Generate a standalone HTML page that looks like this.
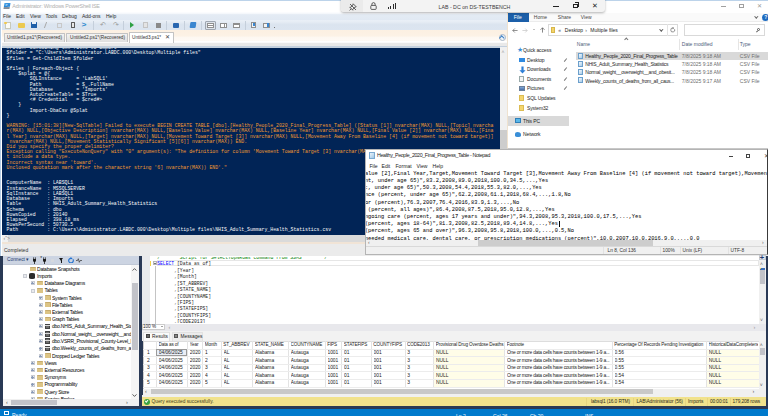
<!DOCTYPE html>
<html><head><meta charset="utf-8">
<style>
*{margin:0;padding:0;box-sizing:border-box}
html,body{width:768px;height:416px;overflow:hidden;background:#fff;font-family:"Liberation Sans",sans-serif}
.a{position:absolute}
.mono{font-family:"Liberation Mono",monospace}
pre{font-family:"Liberation Mono",monospace;white-space:pre}
</style></head><body>
<div class="a" style="left:0;top:0;width:768px;height:416px;overflow:hidden">

<!-- ===== ISE ===== -->
<div id="ise" class="a" style="left:0;top:0;width:768px;height:257px;background:#fff">
  <!-- title bar -->
  <div class="a" style="left:0;top:0;width:768px;height:12px;background:#fff;border-top:1px solid #bcd3ea"></div>
  <div class="a" style="left:0;top:0;width:1.3px;height:257px;background:#b5cde6"></div>
  <div class="a" style="left:4px;top:2.7px;width:6px;height:6px;background:linear-gradient(#3795e0 0,#2a86d6 62%,#8894a2 66%,#7d8a99 100%);transform:skewX(-10deg)"></div>
  <div class="a" style="left:5.2px;top:2.8px;font:bold 3.8px 'Liberation Mono';color:#e8f3fc">&gt;_</div>
  <div class="a" style="left:12.3px;top:2.9px;font-size:5.4px;letter-spacing:-0.22px;color:#b0b0b0;white-space:nowrap">Administrator: Windows PowerShell ISE</div>
  <!-- menu + toolbar gradient -->
  <div class="a" style="left:2px;top:12px;width:766px;height:8.5px;background:linear-gradient(#fbfcfe 0,#fbfcfe 12%,#e4ebf4 30%,#e1e9f3 90%,#f2f6fa 100%)"></div>
  <div class="a" style="left:2px;top:20.5px;width:766px;height:9.8px;background:linear-gradient(#e9eff6,#dbe4ef 40%,#dce5f0)"></div>
  <div class="a" style="left:3px;top:13.3px;font-size:5px;color:#2b2b2b;white-space:nowrap">File</div>
  <div class="a" style="left:16px;top:13.3px;font-size:5px;color:#2b2b2b;white-space:nowrap">Edit</div>
  <div class="a" style="left:30px;top:13.3px;font-size:5px;color:#2b2b2b;white-space:nowrap">View</div>
  <div class="a" style="left:45.5px;top:13.3px;font-size:5px;color:#2b2b2b;white-space:nowrap">Tools</div>
  <div class="a" style="left:62px;top:13.3px;font-size:5px;color:#2b2b2b;white-space:nowrap">Debug</div>
  <div class="a" style="left:82px;top:13.3px;font-size:5px;color:#2b2b2b;white-space:nowrap">Add-ons</div>
  <div class="a" style="left:106px;top:13.3px;font-size:5px;color:#2b2b2b;white-space:nowrap">Help</div>
  <!-- toolbar icons -->
  <div class="a" style="left:4.5px;top:22px;width:6px;height:6.5px;background:#fbfbf6;border:0.5px solid #c9c9b8"></div>
  <div class="a" style="left:4px;top:21.5px;width:2.5px;height:2.5px;background:#f2c94c;border-radius:50%"></div>
  <div class="a" style="left:17.5px;top:23px;width:7px;height:5px;background:#ecc94f;border-radius:1px"></div>
  <div class="a" style="left:30.5px;top:21.5px;width:6.5px;height:6.5px;background:#1f5fa8;border-radius:0.5px"></div>
  <div class="a" style="left:32px;top:21.5px;width:3.5px;height:2.5px;background:#e8eef5"></div>
  <div class="a" style="left:45px;top:22px;width:3px;height:6px;border-left:1px solid #a9a9a9;transform:skewX(-20deg)"></div>
  <div class="a" style="left:57px;top:22.5px;width:5px;height:5px;border:0.7px solid #c8c8c8"></div>
  <div class="a" style="left:70.5px;top:22px;width:4.5px;height:6px;border:1.2px solid #5a5a5a;border-radius:0.5px;background:#e8e8e8"></div>
  <div class="a" style="left:82px;top:21px;font:bold 7px 'Liberation Sans';color:#2a88d0;transform:scaleX(1.2)">&gt;</div>
  <div class="a" style="left:93px;top:21px;width:1px;height:9px;background:#c5cfdb"></div>
  <div class="a" style="left:100px;top:21px;font:6.5px 'Liberation Sans';color:#9a9a9a">&#x21b6;</div>
  <div class="a" style="left:112.5px;top:21px;font:6.5px 'Liberation Sans';color:#9a9a9a">&#x21b7;</div>
  <div class="a" style="left:123px;top:21px;width:1px;height:9px;background:#c5cfdb"></div>
  <div class="a" style="left:130px;top:22px;width:0;height:0;border-left:4.5px solid #2ea043;border-top:3px solid transparent;border-bottom:3px solid transparent"></div>
  <div class="a" style="left:143px;top:22px;width:5px;height:6px;background:#e4e4e4;border:0.5px solid #c4c4c4"></div>
  <div class="a" style="left:156px;top:22.5px;width:5px;height:5px;background:#8a8a8a"></div>
  <div class="a" style="left:166px;top:21px;width:1px;height:9px;background:#c5cfdb"></div>
  <div class="a" style="left:172.5px;top:23px;width:6px;height:4.5px;background:#2866b0;border-radius:1px"></div>
  <div class="a" style="left:184px;top:21px;width:1px;height:9px;background:#c5cfdb"></div>
  <div class="a" style="left:189.5px;top:22px;width:6px;height:6px;background:#3a86d0;border-radius:1px;transform:skewX(-8deg)"></div>
  <div class="a" style="left:201px;top:21px;width:1px;height:9px;background:#c5cfdb"></div>
  <div class="a" style="left:205px;top:20.5px;width:10.5px;height:9px;background:#dde3ea;border:0.8px solid #9ea6b0;border-radius:1px"></div>
  <div class="a" style="left:207px;top:22.5px;width:6.5px;height:5px;border:0.7px solid #8f8f8f;background:#fff"></div>
  <div class="a" style="left:207px;top:25px;width:6.5px;height:0.7px;background:#8f8f8f"></div>
  <div class="a" style="left:220px;top:22.5px;width:6.5px;height:5px;border:0.7px solid #8f8f8f;background:#fff"></div>
  <div class="a" style="left:223.5px;top:22.5px;width:0.7px;height:5px;background:#8f8f8f"></div>
  <div class="a" style="left:233px;top:22.5px;width:6.5px;height:5px;border:0.7px solid #8f8f8f;background:#fff"></div>
  <div class="a" style="left:233px;top:23.5px;width:6.5px;height:0.7px;background:#8f8f8f"></div>
  <div class="a" style="left:245px;top:21px;width:1px;height:9px;background:#c5cfdb"></div>
  <div class="a" style="left:251px;top:22px;width:5px;height:6px;border:0.7px solid #8f8f8f;background:#f4f4f4"></div>
  <div class="a" style="left:252.5px;top:22.5px;width:2px;height:3px;background:#3a86d0"></div>
  <div class="a" style="left:263px;top:22.5px;width:6.5px;height:5px;border:0.7px solid #8f8f8f;background:#f4f4f4"></div>
  <div class="a" style="left:266.5px;top:23px;width:2.5px;height:4px;background:#3a86d0"></div>
  <div class="a" style="left:274px;top:27px;width:1px;height:1px;background:#777"></div>
  <!-- tab bar -->
  <div class="a" style="left:2px;top:30.3px;width:766px;height:11.2px;background:linear-gradient(#fcf0e2,#fcf2e6 55%,#fdf8f2 65%,#fefaf5)"></div>
  <div class="a" style="left:2px;top:41.5px;width:766px;height:1px;background:#fafafa"></div>
  <div class="a" style="left:2px;top:42.5px;width:766px;height:4px;background:#e9e9e9"></div>
  <div class="a" style="left:2px;top:46.2px;width:766px;height:1.4px;background:#c3d0de"></div>
  <div class="a" style="left:4px;top:33px;width:61px;height:9px;background:linear-gradient(#f3f3f3,#dfdfdf);border:0.6px solid #c3c3c3;border-bottom:none;border-radius:1px 1px 0 0"></div>
  <div class="a" style="left:7px;top:34.6px;font-size:4.7px;color:#333;white-space:nowrap">Untitled1.ps1*(Recovered)</div>
  <div class="a" style="left:66px;top:33px;width:62px;height:9px;background:linear-gradient(#f3f3f3,#dfdfdf);border:0.6px solid #c3c3c3;border-bottom:none;border-radius:1px 1px 0 0"></div>
  <div class="a" style="left:70px;top:34.6px;font-size:4.7px;color:#333;white-space:nowrap">Untitled2.ps1*(Recovered)</div>
  <div class="a" style="left:129px;top:32px;width:45px;height:10.5px;background:#fff;border:0.6px solid #c3c3c3;border-bottom:none;border-radius:1px 1px 0 0"></div>
  <div class="a" style="left:132px;top:34.6px;font-size:4.7px;color:#333;white-space:nowrap">Untitled3.ps1*</div>
  <div class="a" style="left:165px;top:33.4px;font-size:6px;color:#444">&#x2715;</div>
  <!-- collapse button -->
  <div class="a" style="left:498.5px;top:33.5px;width:7px;height:7px;border-radius:50%;background:#eef3f8;border:0.6px solid #a5b4c6"></div>
  <div class="a" style="left:500.3px;top:35.8px;width:3.5px;height:3.5px;border-left:1px solid #3b7fc4;border-top:1px solid #3b7fc4;transform:rotate(45deg)"></div>
  <!-- editor -->
  <div class="a" style="left:2px;top:47.6px;width:498px;height:187.4px;background:#012456;overflow:hidden"><pre id="isepre" class="a" style="left:4.6px;top:-2.4px;font-size:4.84px;line-height:5.2px;color:#fafafa">#Folder containing the files to import
$folder = "C:\Users\Administrator.LABDC.000\Desktop\Multiple files"
$files = Get-ChildItem $folder

$files | Foreach-Object {
    $splat = @{
        SQLInstance     = 'LabSQL1'
        Path            = $_.FullName
        Database        = 'Imports'
        AutoCreateTable = $True
        &lt;# Credential   = $cred#&gt;
    }
        Import-DbaCsv @Splat
}

<span style="color:#f29a30">WARNING: [15:01:38][New-SqlTable] Failed to execute BEGIN CREATE TABLE [dbo].[Healthy_People_2020_Final_Progress_Table] ([Status [1]] nvarchar(MAX) NULL,[Topic] nvarcha
r(MAX) NULL,[Objective Description] nvarchar(MAX) NULL,[Baseline Value] nvarchar(MAX) NULL,[Baseline Year] nvarchar(MAX) NULL,[Final Value [2]] nvarchar(MAX) NULL,[Fina
l Year] nvarchar(MAX) NULL,[Target] nvarchar(MAX) NULL,[Movement Toward Target [3]] nvarchar(MAX) NULL,[Movement Away From Baseline [4] (if movement not toward target)]
 nvarchar(MAX) NULL,[Movement Statistically Significant [5][6]] nvarchar(MAX)) END.
Did you specify the proper delimiter?
Exception calling "ExecuteNonQuery" with "0" argument(s): "The definition for column 'Movement Toward Target [3] nvarchar(MAX)' must include a data type.
t include a data type.
Incorrect syntax near 'toward'.
Unclosed quotation mark after the character string '6] nvarchar(MAX)) END'."</span>


ComputerName  : LABSQL1
InstanceName  : MSSQLSERVER
SqlInstance   : LABSQL1
Database      : Imports
Table         : NHIS_Adult_Summary_Health_Statistics
Schema        : dbo
RowsCopied    : 20140
Elapsed       : 398.18 ms
RowsPerSecond : 50730.5
Path          : C:\Users\Administrator.LABDC.000\Desktop\Multiple files\NHIS_Adult_Summary_Health_Statistics.csv</pre></div>
  <!-- scrollbars -->
  <div class="a" style="left:499.5px;top:47px;width:8.5px;height:188px;background:#f0f0f0"></div>
<div class="a" style="left:500px;top:130px;width:7.5px;height:105px;background:#cdcdcd"></div>
<div class="a" style="left:501.5px;top:49px;font-size:5px;color:#999">&#x2c4;</div>

  <div class="a" style="left:2px;top:235px;width:766px;height:7px;background:#dadada"></div><div class="a" style="left:2px;top:235px;width:6px;height:7px;background:#f0f0f0"></div><div class="a" style="left:3.5px;top:235.2px;font-size:5px;color:#777">&#x2039;"></div>
  <div class="a" style="left:2px;top:242px;width:766px;height:1.5px;background:#f1e4d6"></div>
  <div class="a" style="left:2px;top:243.5px;width:766px;height:12.5px;background:#ebebeb"></div>
  <div class="a" style="left:4px;top:246.6px;font-size:5px;color:#333">Completed</div>
</div>

<!-- ===== SSMS ===== -->
<div class="a" style="left:0;top:256px;width:768px;height:153px;background:#293955"></div>
<div class="a" style="left:3px;top:256px;width:135.5px;height:8.5px;background:#ccd4e2;border-bottom:0.5px solid #c0c8d6"></div>
<div class="a" style="left:7px;top:257.2px;font-size:4.8px;color:#1e3a6e;white-space:nowrap;">Connect &#x25be;</div>
<svg class="a" style="left:33px;top:256.8px" width="3" height="7" viewBox="0 0 3 7"><path d="M0.6 0.3 V2 M2.4 0.3 V2" stroke="#1a1a1a" stroke-width="0.7"/><path d="M0 2 H3 V3.6 Q3 4.8 1.9 4.9 V7 H1.1 V4.9 Q0 4.8 0 3.6 Z" fill="#1a1a1a"/></svg>
<svg class="a" style="left:42.8px;top:256.8px" width="3" height="7" viewBox="0 0 3 7"><path d="M0.6 0.3 V2 M2.4 0.3 V2" stroke="#1a1a1a" stroke-width="0.7"/><path d="M0 2 H3 V3.6 Q3 4.8 1.9 4.9 V7 H1.1 V4.9 Q0 4.8 0 3.6 Z" fill="#1a1a1a"/></svg>
<div class="a" style="left:40.3px;top:256px;font-size:4.5px;color:#1a1a1a;white-space:nowrap;">*</div>
<div class="a" style="left:51px;top:258.5px;width:3px;height:3px;background:#d5d8de"></div>
<div class="a" style="left:59px;top:257.6px;width:0;height:0;border-left:2.5px solid transparent;border-right:2.5px solid transparent;border-top:3px solid #1a1a1a"></div>
<div class="a" style="left:60.9px;top:260.3px;width:1.2px;height:2.6px;background:#1a1a1a"></div>
<svg class="a" style="left:67.5px;top:256.6px" width="6" height="6.5" viewBox="0 0 6 6.5"><path d="M4.9 2.3 A2.3 2.3 0 1 1 3 1.3" fill="none" stroke="#1d6fd0" stroke-width="1.1"/><path d="M2.6 0 L4.6 1.4 L2.6 2.6 Z" fill="#1d6fd0"/></svg>
<svg class="a" style="left:76px;top:257.5px" width="6" height="5" viewBox="0 0 6 5"><path d="M0 2.5 H1.5 L2.3 0.7 L3.3 4.3 L4.1 2.5 H6" fill="none" stroke="#333" stroke-width="0.7"/></svg>
<div class="a" style="left:3px;top:264.5px;width:128px;height:134.5px;background:#fff"></div>
<div class="a" style="left:131px;top:264.5px;width:7.5px;height:134.5px;background:#f0f0f0"></div>
<div class="a" style="left:131.8px;top:283px;width:6px;height:113px;background:#c2c3c9"></div>
<div class="a" style="left:132.3px;top:266px;font-size:5px;color:#555;white-space:nowrap;">&#x2c4;</div>
<div class="a" style="left:132.3px;top:392px;font-size:5px;color:#555;white-space:nowrap;">&#x2c5;</div>
<div class="a" style="left:3px;top:399px;width:128px;height:6.5px;background:#f0f0f0"></div>
<div class="a" style="left:11px;top:399.6px;width:46px;height:5.4px;background:#c2c3c9"></div>
<div class="a" style="left:6px;top:398.6px;font-size:5.5px;color:#555;white-space:nowrap;">&#x2039;</div>
<div class="a" style="left:126px;top:398.6px;font-size:5.5px;color:#555;white-space:nowrap;">&#x203a;</div>
<div class="a" style="left:131px;top:399px;width:7.5px;height:6.5px;background:#f0f0f0"></div>
<div class="a" style="left:3px;top:405.5px;width:135.5px;height:1px;background:#293955"></div>
<div class="a" style="left:3px;top:263.5px;width:128px;height:135.5px;overflow:hidden">
<div class="a" style="left:27px;top:3.0px;width:6px;height:4.8px;background:#c6ab6c;border-radius:0.5px"></div>
<div class="a" style="left:27.4px;top:4.0px;width:5.6px;height:3.8px;background:#dcc485"></div>
<div class="a" style="left:34px;top:2.3px;font-size:5px;color:#000;white-space:nowrap;letter-spacing:-0.22px">Database Snapshots</div>
<div class="a" style="left:19.5px;top:10.5px;width:4px;height:4px;background:#e8eaee;border:0.5px solid #c9ccd3"></div>
<div class="a" style="left:26px;top:9.5px;width:5.5px;height:6px;background:#2b2b2b;border-radius:2.5px/1.2px"></div>
<div class="a" style="left:34px;top:9.3px;font-size:5px;color:#000;white-space:nowrap;letter-spacing:-0.22px">Imports</div>
<div class="a" style="left:27.5px;top:17.69999999999999px;width:4px;height:4px;background:#e8eaee;border:0.5px solid #c9ccd3"></div>
<div class="a" style="left:28.3px;top:19.399999999999988px;width:2.4px;height:0.6px;background:#8a9bb8"></div>
<div class="a" style="left:29.2px;top:18.49999999999999px;width:0.6px;height:2.4px;background:#8a9bb8"></div>
<div class="a" style="left:34px;top:17.19999999999999px;width:6px;height:4.8px;background:#c6ab6c;border-radius:0.5px"></div>
<div class="a" style="left:34.4px;top:18.19999999999999px;width:5.6px;height:3.8px;background:#dcc485"></div>
<div class="a" style="left:41.5px;top:16.49999999999999px;font-size:5px;color:#000;white-space:nowrap;letter-spacing:-0.22px">Database Diagrams</div>
<div class="a" style="left:27.5px;top:25.0px;width:4px;height:4px;background:#e8eaee;border:0.5px solid #c9ccd3"></div>
<div class="a" style="left:34px;top:24.5px;width:6px;height:4.8px;background:#c6ab6c;border-radius:0.5px"></div>
<div class="a" style="left:34.4px;top:25.5px;width:5.6px;height:3.8px;background:#dcc485"></div>
<div class="a" style="left:41.5px;top:23.8px;font-size:5px;color:#000;white-space:nowrap;letter-spacing:-0.22px">Tables</div>
<div class="a" style="left:35.5px;top:32.19999999999999px;width:4px;height:4px;background:#e8eaee;border:0.5px solid #c9ccd3"></div>
<div class="a" style="left:36.3px;top:33.89999999999999px;width:2.4px;height:0.6px;background:#8a9bb8"></div>
<div class="a" style="left:37.2px;top:32.999999999999986px;width:0.6px;height:2.4px;background:#8a9bb8"></div>
<div class="a" style="left:41.5px;top:31.69999999999999px;width:6px;height:4.8px;background:#c6ab6c;border-radius:0.5px"></div>
<div class="a" style="left:41.9px;top:32.69999999999999px;width:5.6px;height:3.8px;background:#dcc485"></div>
<div class="a" style="left:49.0px;top:30.99999999999999px;font-size:5px;color:#000;white-space:nowrap;letter-spacing:-0.22px">System Tables</div>
<div class="a" style="left:35.5px;top:39.30000000000001px;width:4px;height:4px;background:#e8eaee;border:0.5px solid #c9ccd3"></div>
<div class="a" style="left:36.3px;top:41.000000000000014px;width:2.4px;height:0.6px;background:#8a9bb8"></div>
<div class="a" style="left:37.2px;top:40.10000000000001px;width:0.6px;height:2.4px;background:#8a9bb8"></div>
<div class="a" style="left:41.5px;top:38.80000000000001px;width:6px;height:4.8px;background:#c6ab6c;border-radius:0.5px"></div>
<div class="a" style="left:41.9px;top:39.80000000000001px;width:5.6px;height:3.8px;background:#dcc485"></div>
<div class="a" style="left:49.0px;top:38.10000000000001px;font-size:5px;color:#000;white-space:nowrap;letter-spacing:-0.22px">FileTables</div>
<div class="a" style="left:35.5px;top:46.5px;width:4px;height:4px;background:#e8eaee;border:0.5px solid #c9ccd3"></div>
<div class="a" style="left:36.3px;top:48.2px;width:2.4px;height:0.6px;background:#8a9bb8"></div>
<div class="a" style="left:37.2px;top:47.3px;width:0.6px;height:2.4px;background:#8a9bb8"></div>
<div class="a" style="left:41.5px;top:46.0px;width:6px;height:4.8px;background:#c6ab6c;border-radius:0.5px"></div>
<div class="a" style="left:41.9px;top:47.0px;width:5.6px;height:3.8px;background:#dcc485"></div>
<div class="a" style="left:49.0px;top:45.3px;font-size:5px;color:#000;white-space:nowrap;letter-spacing:-0.22px">External Tables</div>
<div class="a" style="left:35.5px;top:53.5px;width:4px;height:4px;background:#e8eaee;border:0.5px solid #c9ccd3"></div>
<div class="a" style="left:36.3px;top:55.2px;width:2.4px;height:0.6px;background:#8a9bb8"></div>
<div class="a" style="left:37.2px;top:54.3px;width:0.6px;height:2.4px;background:#8a9bb8"></div>
<div class="a" style="left:41.5px;top:53.0px;width:6px;height:4.8px;background:#c6ab6c;border-radius:0.5px"></div>
<div class="a" style="left:41.9px;top:54.0px;width:5.6px;height:3.8px;background:#dcc485"></div>
<div class="a" style="left:49.0px;top:52.3px;font-size:5px;color:#000;white-space:nowrap;letter-spacing:-0.22px">Graph Tables</div>
<div class="a" style="left:35.5px;top:60.80000000000001px;width:4px;height:4px;background:#e8eaee;border:0.5px solid #c9ccd3"></div>
<div class="a" style="left:36.3px;top:62.500000000000014px;width:2.4px;height:0.6px;background:#8a9bb8"></div>
<div class="a" style="left:37.2px;top:61.60000000000001px;width:0.6px;height:2.4px;background:#8a9bb8"></div>
<div class="a" style="left:41.5px;top:60.000000000000014px;width:5.5px;height:5.5px;background:#6d6d6d;border:0.5px solid #444"></div>
<div class="a" style="left:42.0px;top:61.500000000000014px;width:4.5px;height:0.5px;background:#ddd"></div>
<div class="a" style="left:49.0px;top:59.60000000000001px;font-size:5px;color:#000;white-space:nowrap;letter-spacing:-0.22px">dbo.NHIS_Adult_Summary_Health_Statistics</div>
<div class="a" style="left:35.5px;top:68.30000000000001px;width:4px;height:4px;background:#e8eaee;border:0.5px solid #c9ccd3"></div>
<div class="a" style="left:36.3px;top:70.00000000000001px;width:2.4px;height:0.6px;background:#8a9bb8"></div>
<div class="a" style="left:37.2px;top:69.10000000000001px;width:0.6px;height:2.4px;background:#8a9bb8"></div>
<div class="a" style="left:41.5px;top:67.50000000000001px;width:5.5px;height:5.5px;background:#6d6d6d;border:0.5px solid #444"></div>
<div class="a" style="left:42.0px;top:69.00000000000001px;width:4.5px;height:0.5px;background:#ddd"></div>
<div class="a" style="left:49.0px;top:67.10000000000001px;font-size:5px;color:#000;white-space:nowrap;letter-spacing:-0.22px">dbo.Normal_weight__overweight__and_obesity</div>
<div class="a" style="left:35.5px;top:75.69999999999999px;width:4px;height:4px;background:#e8eaee;border:0.5px solid #c9ccd3"></div>
<div class="a" style="left:36.3px;top:77.39999999999999px;width:2.4px;height:0.6px;background:#8a9bb8"></div>
<div class="a" style="left:37.2px;top:76.49999999999999px;width:0.6px;height:2.4px;background:#8a9bb8"></div>
<div class="a" style="left:41.5px;top:74.89999999999999px;width:5.5px;height:5.5px;background:#6d6d6d;border:0.5px solid #444"></div>
<div class="a" style="left:42.0px;top:76.39999999999999px;width:4.5px;height:0.5px;background:#ddd"></div>
<div class="a" style="left:49.0px;top:74.49999999999999px;font-size:5px;color:#000;white-space:nowrap;letter-spacing:-0.22px">dbo.VSRR_Provisional_County-Level_Drug</div>
<div class="a" style="left:35.5px;top:83.10000000000002px;width:4px;height:4px;background:#e8eaee;border:0.5px solid #c9ccd3"></div>
<div class="a" style="left:36.3px;top:84.80000000000003px;width:2.4px;height:0.6px;background:#8a9bb8"></div>
<div class="a" style="left:37.2px;top:83.90000000000002px;width:0.6px;height:2.4px;background:#8a9bb8"></div>
<div class="a" style="left:41.5px;top:82.30000000000003px;width:5.5px;height:5.5px;background:#6d6d6d;border:0.5px solid #444"></div>
<div class="a" style="left:42.0px;top:83.80000000000003px;width:4.5px;height:0.5px;background:#ddd"></div>
<div class="a" style="left:49.0px;top:81.90000000000002px;font-size:5px;color:#000;white-space:nowrap;letter-spacing:-0.22px">dbo.Weekly_counts_of_deaths_from_all_causes</div>
<div class="a" style="left:35.5px;top:90.30000000000001px;width:4px;height:4px;background:#e8eaee;border:0.5px solid #c9ccd3"></div>
<div class="a" style="left:36.3px;top:92.00000000000001px;width:2.4px;height:0.6px;background:#8a9bb8"></div>
<div class="a" style="left:37.2px;top:91.10000000000001px;width:0.6px;height:2.4px;background:#8a9bb8"></div>
<div class="a" style="left:41.5px;top:89.80000000000001px;width:6px;height:4.8px;background:#c6ab6c;border-radius:0.5px"></div>
<div class="a" style="left:41.9px;top:90.80000000000001px;width:5.6px;height:3.8px;background:#dcc485"></div>
<div class="a" style="left:49.0px;top:89.10000000000001px;font-size:5px;color:#000;white-space:nowrap;letter-spacing:-0.22px">Dropped Ledger Tables</div>
<div class="a" style="left:27.5px;top:97.5px;width:4px;height:4px;background:#e8eaee;border:0.5px solid #c9ccd3"></div>
<div class="a" style="left:28.3px;top:99.2px;width:2.4px;height:0.6px;background:#8a9bb8"></div>
<div class="a" style="left:29.2px;top:98.3px;width:0.6px;height:2.4px;background:#8a9bb8"></div>
<div class="a" style="left:34px;top:97.0px;width:6px;height:4.8px;background:#c6ab6c;border-radius:0.5px"></div>
<div class="a" style="left:34.4px;top:98.0px;width:5.6px;height:3.8px;background:#dcc485"></div>
<div class="a" style="left:41.5px;top:96.3px;font-size:5px;color:#000;white-space:nowrap;letter-spacing:-0.22px">Views</div>
<div class="a" style="left:27.5px;top:104.69999999999999px;width:4px;height:4px;background:#e8eaee;border:0.5px solid #c9ccd3"></div>
<div class="a" style="left:28.3px;top:106.39999999999999px;width:2.4px;height:0.6px;background:#8a9bb8"></div>
<div class="a" style="left:29.2px;top:105.49999999999999px;width:0.6px;height:2.4px;background:#8a9bb8"></div>
<div class="a" style="left:34px;top:104.19999999999999px;width:6px;height:4.8px;background:#c6ab6c;border-radius:0.5px"></div>
<div class="a" style="left:34.4px;top:105.19999999999999px;width:5.6px;height:3.8px;background:#dcc485"></div>
<div class="a" style="left:41.5px;top:103.49999999999999px;font-size:5px;color:#000;white-space:nowrap;letter-spacing:-0.22px">External Resources</div>
<div class="a" style="left:27.5px;top:111.89999999999998px;width:4px;height:4px;background:#e8eaee;border:0.5px solid #c9ccd3"></div>
<div class="a" style="left:28.3px;top:113.59999999999998px;width:2.4px;height:0.6px;background:#8a9bb8"></div>
<div class="a" style="left:29.2px;top:112.69999999999997px;width:0.6px;height:2.4px;background:#8a9bb8"></div>
<div class="a" style="left:34px;top:111.39999999999998px;width:6px;height:4.8px;background:#c6ab6c;border-radius:0.5px"></div>
<div class="a" style="left:34.4px;top:112.39999999999998px;width:5.6px;height:3.8px;background:#dcc485"></div>
<div class="a" style="left:41.5px;top:110.69999999999997px;font-size:5px;color:#000;white-space:nowrap;letter-spacing:-0.22px">Synonyms</div>
<div class="a" style="left:27.5px;top:119.10000000000002px;width:4px;height:4px;background:#e8eaee;border:0.5px solid #c9ccd3"></div>
<div class="a" style="left:28.3px;top:120.80000000000003px;width:2.4px;height:0.6px;background:#8a9bb8"></div>
<div class="a" style="left:29.2px;top:119.90000000000002px;width:0.6px;height:2.4px;background:#8a9bb8"></div>
<div class="a" style="left:34px;top:118.60000000000002px;width:6px;height:4.8px;background:#c6ab6c;border-radius:0.5px"></div>
<div class="a" style="left:34.4px;top:119.60000000000002px;width:5.6px;height:3.8px;background:#dcc485"></div>
<div class="a" style="left:41.5px;top:117.90000000000002px;font-size:5px;color:#000;white-space:nowrap;letter-spacing:-0.22px">Programmability</div>
<div class="a" style="left:27.5px;top:126.30000000000001px;width:4px;height:4px;background:#e8eaee;border:0.5px solid #c9ccd3"></div>
<div class="a" style="left:28.3px;top:128.0px;width:2.4px;height:0.6px;background:#8a9bb8"></div>
<div class="a" style="left:29.2px;top:127.10000000000001px;width:0.6px;height:2.4px;background:#8a9bb8"></div>
<div class="a" style="left:34px;top:125.80000000000001px;width:6px;height:4.8px;background:#c6ab6c;border-radius:0.5px"></div>
<div class="a" style="left:34.4px;top:126.80000000000001px;width:5.6px;height:3.8px;background:#dcc485"></div>
<div class="a" style="left:41.5px;top:125.10000000000001px;font-size:5px;color:#000;white-space:nowrap;letter-spacing:-0.22px">Query Store</div>
<div class="a" style="left:27.5px;top:133.5px;width:4px;height:4px;background:#e8eaee;border:0.5px solid #c9ccd3"></div>
<div class="a" style="left:28.3px;top:135.2px;width:2.4px;height:0.6px;background:#8a9bb8"></div>
<div class="a" style="left:29.2px;top:134.3px;width:0.6px;height:2.4px;background:#8a9bb8"></div>
<div class="a" style="left:34px;top:133.0px;width:6px;height:4.8px;background:#c6ab6c;border-radius:0.5px"></div>
<div class="a" style="left:34.4px;top:134.0px;width:5.6px;height:3.8px;background:#dcc485"></div>
<div class="a" style="left:41.5px;top:132.3px;font-size:5px;color:#000;white-space:nowrap;letter-spacing:-0.22px">Service Broker</div>
</div>
<div class="a" style="left:131px;top:264.5px;width:7.5px;height:134.5px;background:#f5f5f5"></div>
<div class="a" style="left:131.8px;top:283px;width:6px;height:67px;background:#c2c3c9"></div>
<svg class="a" style="left:132px;top:267.5px" width="5" height="3" viewBox="0 0 5 3"><path d="M0.5 2.6 L2.5 0.6 L4.5 2.6" fill="none" stroke="#333" stroke-width="0.8"/></svg>
<svg class="a" style="left:132px;top:393.5px" width="5" height="3" viewBox="0 0 5 3"><path d="M0.5 0.4 L2.5 2.4 L4.5 0.4" fill="none" stroke="#333" stroke-width="0.8"/></svg>
<div class="a" style="left:141.5px;top:256px;width:626.5px;height:67.5px;background:#fff"></div>
<div class="a" style="left:141.5px;top:256px;width:8px;height:67.5px;background:#e9eaec"></div>
<div class="a" style="left:149.5px;top:256px;width:1.2px;height:67.5px;background:#fff"></div>
<div class="a" style="left:154.6px;top:265.5px;width:0.5px;height:58px;background:#c4c4c4"></div>
<div class="a" style="left:152.6px;top:261.3px;width:4px;height:4px;background:#f4f4f4;border:0.5px solid #b5b5b5"></div>
<div class="a" style="left:153.6px;top:263.1px;width:2px;height:0.5px;background:#777"></div>
<div class="a" style="left:150px;top:260.5px;width:1.3px;height:5px;background:#f2d24a"></div>
<div class="a" style="left:156.8px;top:260px;width:602px;height:6.3px;border:0.5px solid #e6e6e6"></div>
<div class="a" style="left:141.5px;top:256.8px;width:617px;height:66.7px;overflow:hidden"><pre id="qpre" class="a" style="left:15.7px;top:-2.2px;font-size:4.73px;line-height:6.48px;color:#222"><span style="color:#008000">/****** Script for SelectTopNRows command from SSMS  ******/</span>
<span style="color:#0000ff">SELECT</span> [Data as of]
      <span style="color:#808080">,</span>[Year]
      <span style="color:#808080">,</span>[Month]
      <span style="color:#808080">,</span>[ST_ABBREV]
      <span style="color:#808080">,</span>[STATE_NAME]
      <span style="color:#808080">,</span>[COUNTYNAME]
      <span style="color:#808080">,</span>[FIPS]
      <span style="color:#808080">,</span>[STATEFIPS]
      <span style="color:#808080">,</span>[COUNTYFIPS]
      <span style="color:#808080">,</span>[CODE2013]</pre></div>
<div class="a" style="left:759px;top:256px;width:7px;height:67.5px;background:#f0f0f0"></div>
<div class="a" style="left:759.3px;top:254.5px;width:6.5px;height:5.8px;background:#dfe3ea;border:0.5px solid #c3c9d3"></div>
<div class="a" style="left:759.8px;top:252.8px;font-size:7.5px;color:#1e3a6e;white-space:nowrap;font-weight:bold">+</div>
<div class="a" style="left:760px;top:260.5px;font-size:5px;color:#666;white-space:nowrap;">&#x2c4;</div>
<div class="a" style="left:759.8px;top:268.3px;width:5.5px;height:1.5px;background:#3d6fb8"></div>
<div class="a" style="left:759.8px;top:267.8px;width:1.5px;height:0.8px;background:#f2c94c"></div>
<div class="a" style="left:760px;top:270px;width:5px;height:14px;background:#c2c3c9"></div>
<div class="a" style="left:760px;top:316.5px;font-size:5px;color:#666;white-space:nowrap;">&#x2c5;</div>
<div class="a" style="left:766px;top:256px;width:2px;height:153px;background:#293955"></div>
<div class="a" style="left:141.5px;top:323.5px;width:624.5px;height:7px;background:#e8e8ec"></div>
<div class="a" style="left:142px;top:323.8px;width:23px;height:6.3px;background:#fff;border:0.5px solid #ccc"></div>
<div class="a" style="left:143px;top:324.3px;font-size:4.6px;color:#222;white-space:nowrap;">100 %</div>
<div class="a" style="left:161px;top:326.3px;width:0;height:0;border-left:1.3px solid transparent;border-right:1.3px solid transparent;border-top:1.5px solid #444"></div>
<div class="a" style="left:168.5px;top:323.8px;font-size:5.5px;color:#999;white-space:nowrap;">&#x2039;</div>
<div class="a" style="left:753.5px;top:323.8px;font-size:5.5px;color:#999;white-space:nowrap;">&#x203a;</div>
<div class="a" style="left:141.5px;top:330.5px;width:624.5px;height:10.5px;background:#f2f2f2"></div>
<div class="a" style="left:143px;top:331.5px;width:27px;height:9.5px;background:#fafafa;border:0.5px solid #e1e1e1;border-bottom:none"></div>
<div class="a" style="left:145.5px;top:333.5px;width:4.5px;height:4.5px;background:#666;border:0.5px solid #444"></div>
<div class="a" style="left:152px;top:333.8px;font-size:4.8px;color:#222;white-space:nowrap;">Results</div>
<div class="a" style="left:171.5px;top:331.5px;width:31px;height:9.5px;background:#ececec;border:0.5px solid #e1e1e1;border-bottom:none"></div>
<div class="a" style="left:173.5px;top:333.5px;width:4.5px;height:4.5px;background:#888;border:0.5px solid #555"></div>
<div class="a" style="left:180.5px;top:334.3px;font-size:4.8px;color:#222;white-space:nowrap;">Messages</div>
<div class="a" style="left:142.5px;top:341px;width:616px;height:47.5px;background:#fff;border-left:0.6px solid #ccc;border-top:0.6px solid #ddd"></div>
<div class="a" style="left:433.3px;top:348.5px;width:70.9px;height:39px;background:#fffde8"></div>
<div class="a" style="left:706px;top:348.5px;width:52.5px;height:39px;background:#fffde8"></div>
<div class="a" style="left:156px;top:341.2px;width:0.6px;height:46.5px;background:#e3e3e3"></div>
<div class="a" style="left:187px;top:341.2px;width:0.6px;height:46.5px;background:#e3e3e3"></div>
<div class="a" style="left:202.2px;top:341.2px;width:0.6px;height:46.5px;background:#e3e3e3"></div>
<div class="a" style="left:220.75px;top:341.2px;width:0.6px;height:46.5px;background:#e3e3e3"></div>
<div class="a" style="left:252.3px;top:341.2px;width:0.6px;height:46.5px;background:#e3e3e3"></div>
<div class="a" style="left:288px;top:341.2px;width:0.6px;height:46.5px;background:#e3e3e3"></div>
<div class="a" style="left:324.7px;top:341.2px;width:0.6px;height:46.5px;background:#e3e3e3"></div>
<div class="a" style="left:341.3px;top:341.2px;width:0.6px;height:46.5px;background:#e3e3e3"></div>
<div class="a" style="left:370.8px;top:341.2px;width:0.6px;height:46.5px;background:#e3e3e3"></div>
<div class="a" style="left:404.5px;top:341.2px;width:0.6px;height:46.5px;background:#e3e3e3"></div>
<div class="a" style="left:433.3px;top:341.2px;width:0.6px;height:46.5px;background:#e3e3e3"></div>
<div class="a" style="left:504.2px;top:341.2px;width:0.6px;height:46.5px;background:#e3e3e3"></div>
<div class="a" style="left:611.7px;top:341.2px;width:0.6px;height:46.5px;background:#e3e3e3"></div>
<div class="a" style="left:706px;top:341.2px;width:0.6px;height:46.5px;background:#e3e3e3"></div>
<div class="a" style="left:143px;top:348.5px;width:615.5px;height:0.6px;background:#ececec"></div>
<div class="a" style="left:143px;top:356.1px;width:615.5px;height:0.6px;background:#ececec"></div>
<div class="a" style="left:143px;top:363.7px;width:615.5px;height:0.6px;background:#ececec"></div>
<div class="a" style="left:143px;top:371.3px;width:615.5px;height:0.6px;background:#ececec"></div>
<div class="a" style="left:143px;top:378.9px;width:615.5px;height:0.6px;background:#ececec"></div>
<div class="a" style="left:143px;top:386.5px;width:615.5px;height:0.6px;background:#ececec"></div>
<div class="a" style="left:156.3px;top:348.6px;width:30.9px;height:7.6px;border:0.7px solid #9a9a9a;background:#e9eef5"></div>
<div class="a" style="left:143px;top:341px;width:615.5px;height:47px;overflow:hidden">
<div class="a" style="left:15.5px;top:1.4px;width:28px;overflow:hidden;font-size:4.6px;color:#1a1a1a;white-space:nowrap;letter-spacing:-0.1px">Data as of</div>
<div class="a" style="left:46.5px;top:1.4px;width:12.199999999999989px;overflow:hidden;font-size:4.6px;color:#1a1a1a;white-space:nowrap;letter-spacing:-0.1px">Year</div>
<div class="a" style="left:61.69999999999999px;top:1.4px;width:15.550000000000011px;overflow:hidden;font-size:4.6px;color:#1a1a1a;white-space:nowrap;letter-spacing:-0.1px">Month</div>
<div class="a" style="left:80.25px;top:1.4px;width:28.55000000000001px;overflow:hidden;font-size:4.6px;color:#1a1a1a;white-space:nowrap;letter-spacing:-0.1px">ST_ABBREV</div>
<div class="a" style="left:111.80000000000001px;top:1.4px;width:32.69999999999999px;overflow:hidden;font-size:4.6px;color:#1a1a1a;white-space:nowrap;letter-spacing:-0.1px">STATE_NAME</div>
<div class="a" style="left:147.5px;top:1.4px;width:33.69999999999999px;overflow:hidden;font-size:4.6px;color:#1a1a1a;white-space:nowrap;letter-spacing:-0.1px">COUNTYNAME</div>
<div class="a" style="left:184.2px;top:1.4px;width:13.600000000000023px;overflow:hidden;font-size:4.6px;color:#1a1a1a;white-space:nowrap;letter-spacing:-0.1px">FIPS</div>
<div class="a" style="left:200.8px;top:1.4px;width:26.5px;overflow:hidden;font-size:4.6px;color:#1a1a1a;white-space:nowrap;letter-spacing:-0.1px">STATEFIPS</div>
<div class="a" style="left:230.3px;top:1.4px;width:30.69999999999999px;overflow:hidden;font-size:4.6px;color:#1a1a1a;white-space:nowrap;letter-spacing:-0.1px">COUNTYFIPS</div>
<div class="a" style="left:264.0px;top:1.4px;width:25.80000000000001px;overflow:hidden;font-size:4.6px;color:#1a1a1a;white-space:nowrap;letter-spacing:-0.1px">CODE2013</div>
<div class="a" style="left:292.8px;top:1.4px;width:67.89999999999998px;overflow:hidden;font-size:4.6px;color:#1a1a1a;white-space:nowrap;letter-spacing:-0.1px">Provisional Drug Overdose Deaths</div>
<div class="a" style="left:363.7px;top:1.4px;width:104.50000000000006px;overflow:hidden;font-size:4.6px;color:#1a1a1a;white-space:nowrap;letter-spacing:-0.1px">Footnote</div>
<div class="a" style="left:471.20000000000005px;top:1.4px;width:91.29999999999995px;overflow:hidden;font-size:4.6px;color:#1a1a1a;white-space:nowrap;letter-spacing:-0.1px">Percentage Of Records Pending Investigation</div>
<div class="a" style="left:565.5px;top:1.4px;width:49.5px;overflow:hidden;font-size:4.6px;color:#1a1a1a;white-space:nowrap;letter-spacing:-0.1px">HistoricalDataCompleteness</div>
<div class="a" style="left:4px;top:9.0px;font-size:4.9px;color:#1a1a1a">1</div>
<div class="a" style="left:15.8px;top:9.0px;width:27.5px;overflow:hidden;font-size:4.9px;color:#1a1a1a;white-space:nowrap;letter-spacing:-0.05px">04/06/2025</div>
<div class="a" style="left:46.8px;top:9.0px;width:11.699999999999989px;overflow:hidden;font-size:4.9px;color:#1a1a1a;white-space:nowrap;letter-spacing:-0.05px">2020</div>
<div class="a" style="left:61.999999999999986px;top:9.0px;width:15.050000000000011px;overflow:hidden;font-size:4.9px;color:#1a1a1a;white-space:nowrap;letter-spacing:-0.05px">1</div>
<div class="a" style="left:80.55px;top:9.0px;width:28.05000000000001px;overflow:hidden;font-size:4.9px;color:#1a1a1a;white-space:nowrap;letter-spacing:-0.05px">AL</div>
<div class="a" style="left:112.10000000000001px;top:9.0px;width:32.19999999999999px;overflow:hidden;font-size:4.9px;color:#1a1a1a;white-space:nowrap;letter-spacing:-0.05px">Alabama</div>
<div class="a" style="left:147.8px;top:9.0px;width:33.19999999999999px;overflow:hidden;font-size:4.9px;color:#1a1a1a;white-space:nowrap;letter-spacing:-0.05px">Autauga</div>
<div class="a" style="left:184.5px;top:9.0px;width:13.100000000000023px;overflow:hidden;font-size:4.9px;color:#1a1a1a;white-space:nowrap;letter-spacing:-0.05px">1001</div>
<div class="a" style="left:201.10000000000002px;top:9.0px;width:26.0px;overflow:hidden;font-size:4.9px;color:#1a1a1a;white-space:nowrap;letter-spacing:-0.05px">01</div>
<div class="a" style="left:230.60000000000002px;top:9.0px;width:30.19999999999999px;overflow:hidden;font-size:4.9px;color:#1a1a1a;white-space:nowrap;letter-spacing:-0.05px">001</div>
<div class="a" style="left:264.3px;top:9.0px;width:25.30000000000001px;overflow:hidden;font-size:4.9px;color:#1a1a1a;white-space:nowrap;letter-spacing:-0.05px">3</div>
<div class="a" style="left:293.1px;top:9.0px;width:67.39999999999998px;overflow:hidden;font-size:4.9px;color:#1a1a1a;white-space:nowrap;letter-spacing:-0.05px">NULL</div>
<div class="a" style="left:364.0px;top:9.0px;width:104.00000000000006px;overflow:hidden;font-size:4.9px;color:#1a1a1a;white-space:nowrap;letter-spacing:-0.22px">One or more data cells have counts between 1-9 a...</div>
<div class="a" style="left:471.50000000000006px;top:9.0px;width:90.79999999999995px;overflow:hidden;font-size:4.9px;color:#1a1a1a;white-space:nowrap;letter-spacing:-0.05px">0.56</div>
<div class="a" style="left:565.8px;top:9.0px;width:49.0px;overflow:hidden;font-size:4.9px;color:#1a1a1a;white-space:nowrap;letter-spacing:-0.05px">NULL</div>
<div class="a" style="left:4px;top:16.600000000000023px;font-size:4.9px;color:#1a1a1a">2</div>
<div class="a" style="left:15.8px;top:16.600000000000023px;width:27.5px;overflow:hidden;font-size:4.9px;color:#1a1a1a;white-space:nowrap;letter-spacing:-0.05px">04/06/2025</div>
<div class="a" style="left:46.8px;top:16.600000000000023px;width:11.699999999999989px;overflow:hidden;font-size:4.9px;color:#1a1a1a;white-space:nowrap;letter-spacing:-0.05px">2020</div>
<div class="a" style="left:61.999999999999986px;top:16.600000000000023px;width:15.050000000000011px;overflow:hidden;font-size:4.9px;color:#1a1a1a;white-space:nowrap;letter-spacing:-0.05px">2</div>
<div class="a" style="left:80.55px;top:16.600000000000023px;width:28.05000000000001px;overflow:hidden;font-size:4.9px;color:#1a1a1a;white-space:nowrap;letter-spacing:-0.05px">AL</div>
<div class="a" style="left:112.10000000000001px;top:16.600000000000023px;width:32.19999999999999px;overflow:hidden;font-size:4.9px;color:#1a1a1a;white-space:nowrap;letter-spacing:-0.05px">Alabama</div>
<div class="a" style="left:147.8px;top:16.600000000000023px;width:33.19999999999999px;overflow:hidden;font-size:4.9px;color:#1a1a1a;white-space:nowrap;letter-spacing:-0.05px">Autauga</div>
<div class="a" style="left:184.5px;top:16.600000000000023px;width:13.100000000000023px;overflow:hidden;font-size:4.9px;color:#1a1a1a;white-space:nowrap;letter-spacing:-0.05px">1001</div>
<div class="a" style="left:201.10000000000002px;top:16.600000000000023px;width:26.0px;overflow:hidden;font-size:4.9px;color:#1a1a1a;white-space:nowrap;letter-spacing:-0.05px">01</div>
<div class="a" style="left:230.60000000000002px;top:16.600000000000023px;width:30.19999999999999px;overflow:hidden;font-size:4.9px;color:#1a1a1a;white-space:nowrap;letter-spacing:-0.05px">001</div>
<div class="a" style="left:264.3px;top:16.600000000000023px;width:25.30000000000001px;overflow:hidden;font-size:4.9px;color:#1a1a1a;white-space:nowrap;letter-spacing:-0.05px">3</div>
<div class="a" style="left:293.1px;top:16.600000000000023px;width:67.39999999999998px;overflow:hidden;font-size:4.9px;color:#1a1a1a;white-space:nowrap;letter-spacing:-0.05px">NULL</div>
<div class="a" style="left:364.0px;top:16.600000000000023px;width:104.00000000000006px;overflow:hidden;font-size:4.9px;color:#1a1a1a;white-space:nowrap;letter-spacing:-0.22px">One or more data cells have counts between 1-9 a...</div>
<div class="a" style="left:471.50000000000006px;top:16.600000000000023px;width:90.79999999999995px;overflow:hidden;font-size:4.9px;color:#1a1a1a;white-space:nowrap;letter-spacing:-0.05px">0.55</div>
<div class="a" style="left:565.8px;top:16.600000000000023px;width:49.0px;overflow:hidden;font-size:4.9px;color:#1a1a1a;white-space:nowrap;letter-spacing:-0.05px">NULL</div>
<div class="a" style="left:4px;top:24.19999999999999px;font-size:4.9px;color:#1a1a1a">3</div>
<div class="a" style="left:15.8px;top:24.19999999999999px;width:27.5px;overflow:hidden;font-size:4.9px;color:#1a1a1a;white-space:nowrap;letter-spacing:-0.05px">04/06/2025</div>
<div class="a" style="left:46.8px;top:24.19999999999999px;width:11.699999999999989px;overflow:hidden;font-size:4.9px;color:#1a1a1a;white-space:nowrap;letter-spacing:-0.05px">2020</div>
<div class="a" style="left:61.999999999999986px;top:24.19999999999999px;width:15.050000000000011px;overflow:hidden;font-size:4.9px;color:#1a1a1a;white-space:nowrap;letter-spacing:-0.05px">3</div>
<div class="a" style="left:80.55px;top:24.19999999999999px;width:28.05000000000001px;overflow:hidden;font-size:4.9px;color:#1a1a1a;white-space:nowrap;letter-spacing:-0.05px">AL</div>
<div class="a" style="left:112.10000000000001px;top:24.19999999999999px;width:32.19999999999999px;overflow:hidden;font-size:4.9px;color:#1a1a1a;white-space:nowrap;letter-spacing:-0.05px">Alabama</div>
<div class="a" style="left:147.8px;top:24.19999999999999px;width:33.19999999999999px;overflow:hidden;font-size:4.9px;color:#1a1a1a;white-space:nowrap;letter-spacing:-0.05px">Autauga</div>
<div class="a" style="left:184.5px;top:24.19999999999999px;width:13.100000000000023px;overflow:hidden;font-size:4.9px;color:#1a1a1a;white-space:nowrap;letter-spacing:-0.05px">1001</div>
<div class="a" style="left:201.10000000000002px;top:24.19999999999999px;width:26.0px;overflow:hidden;font-size:4.9px;color:#1a1a1a;white-space:nowrap;letter-spacing:-0.05px">01</div>
<div class="a" style="left:230.60000000000002px;top:24.19999999999999px;width:30.19999999999999px;overflow:hidden;font-size:4.9px;color:#1a1a1a;white-space:nowrap;letter-spacing:-0.05px">001</div>
<div class="a" style="left:264.3px;top:24.19999999999999px;width:25.30000000000001px;overflow:hidden;font-size:4.9px;color:#1a1a1a;white-space:nowrap;letter-spacing:-0.05px">3</div>
<div class="a" style="left:293.1px;top:24.19999999999999px;width:67.39999999999998px;overflow:hidden;font-size:4.9px;color:#1a1a1a;white-space:nowrap;letter-spacing:-0.05px">NULL</div>
<div class="a" style="left:364.0px;top:24.19999999999999px;width:104.00000000000006px;overflow:hidden;font-size:4.9px;color:#1a1a1a;white-space:nowrap;letter-spacing:-0.22px">One or more data cells have counts between 1-9 a...</div>
<div class="a" style="left:471.50000000000006px;top:24.19999999999999px;width:90.79999999999995px;overflow:hidden;font-size:4.9px;color:#1a1a1a;white-space:nowrap;letter-spacing:-0.05px">0.55</div>
<div class="a" style="left:565.8px;top:24.19999999999999px;width:49.0px;overflow:hidden;font-size:4.9px;color:#1a1a1a;white-space:nowrap;letter-spacing:-0.05px">NULL</div>
<div class="a" style="left:4px;top:31.80000000000001px;font-size:4.9px;color:#1a1a1a">4</div>
<div class="a" style="left:15.8px;top:31.80000000000001px;width:27.5px;overflow:hidden;font-size:4.9px;color:#1a1a1a;white-space:nowrap;letter-spacing:-0.05px">04/06/2025</div>
<div class="a" style="left:46.8px;top:31.80000000000001px;width:11.699999999999989px;overflow:hidden;font-size:4.9px;color:#1a1a1a;white-space:nowrap;letter-spacing:-0.05px">2020</div>
<div class="a" style="left:61.999999999999986px;top:31.80000000000001px;width:15.050000000000011px;overflow:hidden;font-size:4.9px;color:#1a1a1a;white-space:nowrap;letter-spacing:-0.05px">4</div>
<div class="a" style="left:80.55px;top:31.80000000000001px;width:28.05000000000001px;overflow:hidden;font-size:4.9px;color:#1a1a1a;white-space:nowrap;letter-spacing:-0.05px">AL</div>
<div class="a" style="left:112.10000000000001px;top:31.80000000000001px;width:32.19999999999999px;overflow:hidden;font-size:4.9px;color:#1a1a1a;white-space:nowrap;letter-spacing:-0.05px">Alabama</div>
<div class="a" style="left:147.8px;top:31.80000000000001px;width:33.19999999999999px;overflow:hidden;font-size:4.9px;color:#1a1a1a;white-space:nowrap;letter-spacing:-0.05px">Autauga</div>
<div class="a" style="left:184.5px;top:31.80000000000001px;width:13.100000000000023px;overflow:hidden;font-size:4.9px;color:#1a1a1a;white-space:nowrap;letter-spacing:-0.05px">1001</div>
<div class="a" style="left:201.10000000000002px;top:31.80000000000001px;width:26.0px;overflow:hidden;font-size:4.9px;color:#1a1a1a;white-space:nowrap;letter-spacing:-0.05px">01</div>
<div class="a" style="left:230.60000000000002px;top:31.80000000000001px;width:30.19999999999999px;overflow:hidden;font-size:4.9px;color:#1a1a1a;white-space:nowrap;letter-spacing:-0.05px">001</div>
<div class="a" style="left:264.3px;top:31.80000000000001px;width:25.30000000000001px;overflow:hidden;font-size:4.9px;color:#1a1a1a;white-space:nowrap;letter-spacing:-0.05px">3</div>
<div class="a" style="left:293.1px;top:31.80000000000001px;width:67.39999999999998px;overflow:hidden;font-size:4.9px;color:#1a1a1a;white-space:nowrap;letter-spacing:-0.05px">NULL</div>
<div class="a" style="left:364.0px;top:31.80000000000001px;width:104.00000000000006px;overflow:hidden;font-size:4.9px;color:#1a1a1a;white-space:nowrap;letter-spacing:-0.22px">One or more data cells have counts between 1-9 a...</div>
<div class="a" style="left:471.50000000000006px;top:31.80000000000001px;width:90.79999999999995px;overflow:hidden;font-size:4.9px;color:#1a1a1a;white-space:nowrap;letter-spacing:-0.05px">0.54</div>
<div class="a" style="left:565.8px;top:31.80000000000001px;width:49.0px;overflow:hidden;font-size:4.9px;color:#1a1a1a;white-space:nowrap;letter-spacing:-0.05px">NULL</div>
<div class="a" style="left:4px;top:39.39999999999998px;font-size:4.9px;color:#1a1a1a">5</div>
<div class="a" style="left:15.8px;top:39.39999999999998px;width:27.5px;overflow:hidden;font-size:4.9px;color:#1a1a1a;white-space:nowrap;letter-spacing:-0.05px">04/06/2025</div>
<div class="a" style="left:46.8px;top:39.39999999999998px;width:11.699999999999989px;overflow:hidden;font-size:4.9px;color:#1a1a1a;white-space:nowrap;letter-spacing:-0.05px">2020</div>
<div class="a" style="left:61.999999999999986px;top:39.39999999999998px;width:15.050000000000011px;overflow:hidden;font-size:4.9px;color:#1a1a1a;white-space:nowrap;letter-spacing:-0.05px">5</div>
<div class="a" style="left:80.55px;top:39.39999999999998px;width:28.05000000000001px;overflow:hidden;font-size:4.9px;color:#1a1a1a;white-space:nowrap;letter-spacing:-0.05px">AL</div>
<div class="a" style="left:112.10000000000001px;top:39.39999999999998px;width:32.19999999999999px;overflow:hidden;font-size:4.9px;color:#1a1a1a;white-space:nowrap;letter-spacing:-0.05px">Alabama</div>
<div class="a" style="left:147.8px;top:39.39999999999998px;width:33.19999999999999px;overflow:hidden;font-size:4.9px;color:#1a1a1a;white-space:nowrap;letter-spacing:-0.05px">Autauga</div>
<div class="a" style="left:184.5px;top:39.39999999999998px;width:13.100000000000023px;overflow:hidden;font-size:4.9px;color:#1a1a1a;white-space:nowrap;letter-spacing:-0.05px">1001</div>
<div class="a" style="left:201.10000000000002px;top:39.39999999999998px;width:26.0px;overflow:hidden;font-size:4.9px;color:#1a1a1a;white-space:nowrap;letter-spacing:-0.05px">01</div>
<div class="a" style="left:230.60000000000002px;top:39.39999999999998px;width:30.19999999999999px;overflow:hidden;font-size:4.9px;color:#1a1a1a;white-space:nowrap;letter-spacing:-0.05px">001</div>
<div class="a" style="left:264.3px;top:39.39999999999998px;width:25.30000000000001px;overflow:hidden;font-size:4.9px;color:#1a1a1a;white-space:nowrap;letter-spacing:-0.05px">3</div>
<div class="a" style="left:293.1px;top:39.39999999999998px;width:67.39999999999998px;overflow:hidden;font-size:4.9px;color:#1a1a1a;white-space:nowrap;letter-spacing:-0.05px">NULL</div>
<div class="a" style="left:364.0px;top:39.39999999999998px;width:104.00000000000006px;overflow:hidden;font-size:4.9px;color:#1a1a1a;white-space:nowrap;letter-spacing:-0.22px">One or more data cells have counts between 1-9 a...</div>
<div class="a" style="left:471.50000000000006px;top:39.39999999999998px;width:90.79999999999995px;overflow:hidden;font-size:4.9px;color:#1a1a1a;white-space:nowrap;letter-spacing:-0.05px">0.54</div>
<div class="a" style="left:565.8px;top:39.39999999999998px;width:49.0px;overflow:hidden;font-size:4.9px;color:#1a1a1a;white-space:nowrap;letter-spacing:-0.05px">NULL</div>
</div>
<div class="a" style="left:758.5px;top:341px;width:7.5px;height:47.5px;background:#f0f0f0"></div>
<div class="a" style="left:759.8px;top:341.5px;font-size:5px;color:#555;white-space:nowrap;">&#x2c4;</div>
<div class="a" style="left:759.5px;top:348px;width:5.5px;height:7px;background:#c2c3c9"></div>
<div class="a" style="left:759.8px;top:382px;font-size:5px;color:#555;white-space:nowrap;">&#x2c5;</div>
<div class="a" style="left:142.5px;top:388.5px;width:623.5px;height:6px;background:#f0f0f0"></div>
<div class="a" style="left:151px;top:389px;width:502px;height:5.2px;background:#c8c8c8"></div>
<div class="a" style="left:145px;top:387.6px;font-size:5.5px;color:#555;white-space:nowrap;">&#x2039;</div>
<div class="a" style="left:752.5px;top:387.6px;font-size:5.5px;color:#555;white-space:nowrap;">&#x203a;</div>
<div class="a" style="left:141.5px;top:394.5px;width:624.5px;height:2.5px;background:#f0f0f0"></div>
<div class="a" style="left:141.5px;top:397px;width:624.5px;height:9.3px;background:#f1e28c"></div>
<div class="a" style="left:143.5px;top:398.5px;width:6px;height:6px;border-radius:50%;background:#3aa340"></div>
<div class="a" style="left:145px;top:400px;width:2.8px;height:1.6px;border-left:0.8px solid #fff;border-bottom:0.8px solid #fff;transform:rotate(-45deg)"></div>
<div class="a" style="left:151.5px;top:398.8px;font-size:4.8px;color:#3a3a1a;white-space:nowrap;">Query executed successfully.</div>
<div class="a" style="left:591px;top:398.8px;font-size:4.8px;color:#2b2b1a;white-space:nowrap;letter-spacing:-0.1px">labsql1 (16.0 RTM)</div>
<div class="a" style="left:636.5px;top:398.8px;font-size:4.8px;color:#2b2b1a;white-space:nowrap;letter-spacing:-0.1px">LAB\Administrator (56)</div>
<div class="a" style="left:688px;top:398.8px;font-size:4.8px;color:#2b2b1a;white-space:nowrap;letter-spacing:-0.1px">Imports</div>
<div class="a" style="left:710px;top:398.8px;font-size:4.8px;color:#2b2b1a;white-space:nowrap;letter-spacing:-0.1px">00:00:01</div>
<div class="a" style="left:732.5px;top:398.8px;font-size:4.8px;color:#2b2b1a;white-space:nowrap;letter-spacing:-0.1px">179,208 rows</div>
<div class="a" style="left:586px;top:397.5px;width:0.6px;height:8.5px;background:#e6d480"></div>
<div class="a" style="left:633px;top:397.5px;width:0.6px;height:8.5px;background:#e6d480"></div>
<div class="a" style="left:684.5px;top:397.5px;width:0.6px;height:8.5px;background:#e6d480"></div>
<div class="a" style="left:706.5px;top:397.5px;width:0.6px;height:8.5px;background:#e6d480"></div>
<div class="a" style="left:729.5px;top:397.5px;width:0.6px;height:8.5px;background:#e6d480"></div>
<div class="a" style="left:0;top:408.5px;width:768px;height:7.5px;background:#007acc"></div>
<div class="a" style="left:3.5px;top:410.5px;width:5px;height:4.5px;border:0.5px dashed #fff"></div>
<div class="a" style="left:12px;top:412px;font-size:5px;color:#fff;white-space:nowrap;">Ready</div>
<div class="a" style="left:456px;top:412.6px;font-size:5px;color:#fff;white-space:nowrap;">Ln 2</div>
<div class="a" style="left:493px;top:412.6px;font-size:5px;color:#fff;white-space:nowrap;">Col 26</div>
<div class="a" style="left:530px;top:412.6px;font-size:5px;color:#fff;white-space:nowrap;">Ch 20</div>
<div class="a" style="left:585px;top:412.6px;font-size:5px;color:#fff;white-space:nowrap;">INS</div>

<!-- ===== Notepad ===== -->
<div id="np" class="a" style="left:365px;top:148.5px;width:403px;height:106px;background:#fff;border:0.6px solid #b4b4b4;border-right:1.5px solid #3a3a3a;overflow:hidden">
  <div class="a" style="left:3px;top:2px;width:6px;height:7px;background:linear-gradient(135deg,#e9f3fb,#9fc7e6);border:0.5px solid #7aa9d0"></div>
  <div class="a" style="left:11px;top:2.4px;font-size:5.3px;letter-spacing:-0.36px;color:#222;white-space:nowrap">Healthy_People_2020_Final_Progress_Table - Notepad</div>
  <div class="a" style="left:362.5px;top:6.2px;width:4px;height:0.5px;background:#444"></div>
  <div class="a" style="left:380px;top:4.2px;width:4px;height:4px;border:0.5px solid #444"></div>
  <div class="a" style="left:397.5px;top:2.5px;font-size:6px;color:#444">&#x2715;</div>
  <div class="a" style="left:3.5px;top:13.1px;font-size:5.1px;color:#222;white-space:nowrap">File</div>
  <div class="a" style="left:15.5px;top:13.1px;font-size:5.1px;color:#222;white-space:nowrap">Edit</div>
  <div class="a" style="left:29.5px;top:13.1px;font-size:5.1px;color:#222;white-space:nowrap">Format</div>
  <div class="a" style="left:50.5px;top:13.1px;font-size:5.1px;color:#222;white-space:nowrap">View</div>
  <div class="a" style="left:66.5px;top:13.1px;font-size:5.1px;color:#222;white-space:nowrap">Help</div>
  <div class="a" style="left:0;top:20.5px;width:402px;height:70px;overflow:hidden">
    <pre id="nppre" class="a" style="left:-1.1px;top:0.7px;font-size:5.36px;line-height:7.2px;color:#111;-webkit-text-stroke:0.04px #111">alue [2],Final Year,Target,Movement Toward Target [3],Movement Away From Baseline [4] (if movement not toward target),Movement Statistically
nt, under age 65)",83.2,2008,89.0,2018,100.0,34.5,...,Yes
:, under age 65)",50.3,2008,54.4,2018,55.3,82.0,...,Yes
nce (percent, under age 65)",62.2,2008,61.1,2018,68.4,...,1.8,No
or (percent),76.3,2007,76.4,2016,83.9,1.3,...,No
 (percent, all ages)",86.4,2008,87.5,2018,95.0,12.8,...,Yes
ngoing care (percent, ages 17 years and under)",94.3,2008,95.3,2018,100.0,17.5,...,Yes
(percent, ages 18-64)",81.3,2008,82.5,2018,89.4,14.8,...,Yes
(percent, ages 65 and over)",96.3,2008,95.8,2018,100.0,...,0.5,No
needed medical care, dental care, or prescription medications (percent)",10.0,2007,10.0,2016,9.0,...,0.0</pre>
    <div class="a" style="left:192.5px;top:50.5px;width:0.6px;height:6px;background:#000"></div>
  </div>
  <div class="a" style="left:0;top:90px;width:402px;height:6.5px;background:#f0f0f0"></div>
  <div class="a" style="left:112px;top:90.5px;width:175px;height:5.8px;background:#cdcdcd"></div>
  <div class="a" style="left:2px;top:89.8px;font-size:5px;color:#606060">&#x2039;</div>
  <div class="a" style="left:396px;top:89.8px;font-size:5px;color:#606060">&#x203a;</div>
  <div class="a" style="left:0;top:96.5px;width:402px;height:9.5px;background:#f0f0f0;border-top:0.5px solid #d9d9d9"></div>
  <div class="a" style="left:237px;top:97px;width:0.5px;height:8px;background:#e2e2e2"></div>
  <div class="a" style="left:293.5px;top:97px;width:0.5px;height:8px;background:#e2e2e2"></div>
  <div class="a" style="left:313.5px;top:97px;width:0.5px;height:8px;background:#e2e2e2"></div>
  <div class="a" style="left:361.5px;top:97px;width:0.5px;height:8px;background:#e2e2e2"></div>
  <div class="a" style="left:241.5px;top:98.5px;font-size:4.8px;color:#333;white-space:nowrap">Ln 8, Col 136</div>
  <div class="a" style="left:296.5px;top:98.5px;font-size:4.8px;color:#333;white-space:nowrap">100%</div>
  <div class="a" style="left:316.5px;top:98.5px;font-size:4.8px;color:#333;white-space:nowrap">Unix (LF)</div>
  <div class="a" style="left:364.5px;top:98.5px;font-size:4.8px;color:#333;white-space:nowrap">UTF-8</div>
</div>

<!-- exstart -->
<!-- ===== Explorer ===== -->
<div id="ex" class="a" style="left:506.8px;top:0;width:261.2px;height:149px;background:#fff;border-left:1.2px solid #efe2cf;border-bottom:0.5px solid #c8c8c8;overflow:hidden">
<div class="a" style="left:0;top:0;width:260px;height:1px;background:#bcd3ea"></div>
<div class="a" style="left:213px;top:6px;width:5px;height:0.6px;background:#a0a0a0"></div>
<div class="a" style="left:231.5px;top:3.5px;width:4.5px;height:4.5px;border:0.6px solid #a0a0a0"></div>
<div class="a" style="left:249px;top:2px;font-size:6px;color:#999">&#x2715;</div>
<div class="a" style="left:0;top:12.5px;width:260px;height:9.5px;background:#fafafa;border-bottom:0.6px solid #ececec"></div>
<div class="a" style="left:0.3px;top:12.75px;width:20.7px;height:8.8px;background:#1c5fa9"></div>
<div class="a" style="left:6px;top:14.3px;font-size:5px;color:#222;white-space:nowrap;color:#fff">File</div>
<div class="a" style="left:26px;top:14.3px;font-size:5px;color:#222;white-space:nowrap;color:#444">Home</div>
<div class="a" style="left:50px;top:14.3px;font-size:5px;color:#222;white-space:nowrap;color:#444">Share</div>
<div class="a" style="left:73px;top:14.3px;font-size:5px;color:#222;white-space:nowrap;color:#444">View</div>
<div class="a" style="left:247px;top:15px;width:2.6px;height:2.6px;border-right:0.7px solid #666;border-bottom:0.7px solid #666;transform:rotate(45deg)"></div>
<div class="a" style="left:254.5px;top:13.5px;width:7px;height:7px;border-radius:50%;background:#1c6ac0;color:#fff;font:bold 5px 'Liberation Sans';text-align:center;line-height:7px">?</div>
<svg class="a" style="left:4px;top:27.5px" width="6" height="5" viewBox="0 0 6 5"><path d="M5.6 2.5 H0.8 M2.8 0.5 L0.8 2.5 L2.8 4.5" fill="none" stroke="#666" stroke-width="0.7"/></svg>
<svg class="a" style="left:14.5px;top:27.5px" width="6" height="5" viewBox="0 0 6 5"><path d="M0.4 2.5 H5.2 M3.2 0.5 L5.2 2.5 L3.2 4.5" fill="none" stroke="#c4c4c4" stroke-width="0.7"/></svg>
<div class="a" style="left:25.5px;top:28.5px;width:0;height:0;border-left:1.6px solid transparent;border-right:1.6px solid transparent;border-top:1.8px solid #888"></div>
<svg class="a" style="left:32.5px;top:26.8px" width="5" height="6" viewBox="0 0 5 6"><path d="M2.5 5.6 V0.8 M0.5 2.8 L2.5 0.8 L4.5 2.8" fill="none" stroke="#555" stroke-width="0.7"/></svg>
<div class="a" style="left:40.5px;top:24px;width:130px;height:12.2px;border:0.6px solid #d9d9d9;background:#fff"></div>
<div class="a" style="left:43px;top:27px;width:4.5px;height:6px;background:#f2d36b;border:0.4px solid #d7b64a"></div>
<div class="a" style="left:50.5px;top:27px;font-size:5px;color:#222;white-space:nowrap;color:#555;font-size:5px">&#xab;</div>
<div class="a" style="left:57px;top:27.2px;font-size:5px;color:#222;white-space:nowrap;color:#222">Desktop</div>
<div class="a" style="left:77.5px;top:27px;font-size:5px;color:#222;white-space:nowrap;color:#555">&#x203a;</div>
<div class="a" style="left:82.5px;top:27.2px;font-size:5px;color:#222;white-space:nowrap;color:#222">Multiple files</div>
<div class="a" style="left:151.8px;top:28px;width:2.6px;height:2.6px;border-right:0.7px solid #555;border-bottom:0.7px solid #555;transform:rotate(45deg)"></div>
<div class="a" style="left:159px;top:24px;width:0.6px;height:12px;background:#e3e3e3"></div>
<svg class="a" style="left:162.5px;top:27px" width="6" height="6" viewBox="0 0 6 6"><path d="M4.6 2.2 A2 2 0 1 1 3 1" fill="none" stroke="#666" stroke-width="0.7"/><path d="M2.6 0 L4.2 1 L2.8 2.2 Z" fill="#666"/></svg>
<div class="a" style="left:176px;top:24px;width:81px;height:12.2px;border:0.6px solid #d9d9d9;background:#fff"></div>
<div class="a" style="left:249px;top:28px;width:3.2px;height:3.2px;border:0.7px solid #555;border-radius:50%"></div>
<div class="a" style="left:248px;top:31.3px;width:2px;height:0.7px;background:#555;transform:rotate(-45deg)"></div>
<div class="a" style="left:117px;top:38.2px;width:2.6px;height:2.6px;border-left:0.6px solid #777;border-top:0.6px solid #777;transform:rotate(45deg)"></div>
<div class="a" style="left:69px;top:40.6px;font-size:5px;color:#222;white-space:nowrap;color:#4c607a">Name</div>
<div class="a" style="left:171.5px;top:39px;width:0.6px;height:11px;background:#e5e5e5"></div>
<div class="a" style="left:174px;top:40.6px;font-size:5px;color:#222;white-space:nowrap;color:#4c607a">Date modified</div>
<div class="a" style="left:230px;top:39px;width:0.6px;height:11px;background:#e5e5e5"></div>
<div class="a" style="left:232px;top:40.6px;font-size:5px;color:#222;white-space:nowrap;color:#4c607a">Type</div>
<div class="a" style="left:68px;top:51.5px;width:192px;height:8.5px;background:#d9d9d9"></div>
<div class="a" style="left:69.8px;top:52.5px;width:5px;height:6px;background:linear-gradient(135deg,#f4f9fd,#a8cce8);border:0.4px solid #6b9fcc"></div>
<div class="a" style="left:77.5px;top:53.0px;font-size:5px;color:#222;white-space:nowrap;color:#1e1e1e;letter-spacing:-0.2px">Healthy_People_2020_Final_Progress_Table</div>
<div class="a" style="left:174px;top:53.0px;font-size:5px;color:#222;white-space:nowrap;color:#6d6d6d">7/8/2025 9:18 AM</div>
<div class="a" style="left:232px;top:53.0px;font-size:5px;color:#222;white-space:nowrap;color:#6d6d6d">CSV File</div>
<div class="a" style="left:69.8px;top:60.7px;width:5px;height:6px;background:linear-gradient(135deg,#f4f9fd,#a8cce8);border:0.4px solid #6b9fcc"></div>
<div class="a" style="left:77.5px;top:61.2px;font-size:5px;color:#222;white-space:nowrap;color:#1e1e1e;letter-spacing:-0.2px">NHIS_Adult_Summary_Health_Statistics</div>
<div class="a" style="left:174px;top:61.2px;font-size:5px;color:#222;white-space:nowrap;color:#6d6d6d">7/8/2025 9:18 AM</div>
<div class="a" style="left:232px;top:61.2px;font-size:5px;color:#222;white-space:nowrap;color:#6d6d6d">CSV File</div>
<div class="a" style="left:69.8px;top:68.9px;width:5px;height:6px;background:linear-gradient(135deg,#f4f9fd,#a8cce8);border:0.4px solid #6b9fcc"></div>
<div class="a" style="left:77.5px;top:69.4px;font-size:5px;color:#222;white-space:nowrap;color:#1e1e1e;letter-spacing:-0.2px">Normal_weight__overweight__and_obesit...</div>
<div class="a" style="left:174px;top:69.4px;font-size:5px;color:#222;white-space:nowrap;color:#6d6d6d">7/8/2025 9:18 AM</div>
<div class="a" style="left:232px;top:69.4px;font-size:5px;color:#222;white-space:nowrap;color:#6d6d6d">CSV File</div>
<div class="a" style="left:69.8px;top:77.1px;width:5px;height:6px;background:linear-gradient(135deg,#f4f9fd,#a8cce8);border:0.4px solid #6b9fcc"></div>
<div class="a" style="left:77.5px;top:77.6px;font-size:5px;color:#222;white-space:nowrap;color:#1e1e1e;letter-spacing:-0.2px">Weekly_counts_of_deaths_from_all_caus...</div>
<div class="a" style="left:174px;top:77.6px;font-size:5px;color:#222;white-space:nowrap;color:#6d6d6d">7/8/2025 9:17 AM</div>
<div class="a" style="left:232px;top:77.6px;font-size:5px;color:#222;white-space:nowrap;color:#6d6d6d">CSV File</div>
<div class="a" style="left:0;top:116.2px;width:61px;height:9.5px;background:#d9d9d9"></div>
<div class="a" style="left:9px;top:46px;font-size:7px;color:#3d8fd8">&#x2605;</div>
<div class="a" style="left:15.2px;top:46.8px;font-size:5px;color:#222;white-space:nowrap;color:#1e1e1e;letter-spacing:-0.12px">Quick access</div>
<div class="a" style="left:11px;top:57.5px;width:6px;height:4.5px;background:#2f8ae0"></div>
<div class="a" style="left:19.2px;top:56.8px;font-size:5px;color:#222;white-space:nowrap;color:#1e1e1e;letter-spacing:-0.12px">Desktop</div>
<div class="a" style="left:57px;top:57.5px;width:0.8px;height:4px;background:#777;transform:rotate(40deg)"></div>
<svg class="a" style="left:11px;top:65.5px" width="7" height="8" viewBox="0 0 7 8"><path d="M2.4 0.5 H4.6 V4.2 H6.6 L3.5 7.6 L0.4 4.2 H2.4 Z" fill="#2f7fd6"/></svg>
<div class="a" style="left:19.2px;top:66.3px;font-size:5px;color:#222;white-space:nowrap;color:#1e1e1e;letter-spacing:-0.12px">Downloads</div>
<div class="a" style="left:57px;top:67.0px;width:0.8px;height:4px;background:#777;transform:rotate(40deg)"></div>
<div class="a" style="left:11.5px;top:76px;width:4.5px;height:6px;background:#f4f4f4;border:0.5px solid #9aa"></div>
<div class="a" style="left:19.2px;top:75.8px;font-size:5px;color:#222;white-space:nowrap;color:#1e1e1e;letter-spacing:-0.12px">Documents</div>
<div class="a" style="left:57px;top:76.5px;width:0.8px;height:4px;background:#777;transform:rotate(40deg)"></div>
<div class="a" style="left:11px;top:86.0px;width:6px;height:4.5px;background:linear-gradient(#7fa7d9,#4a6fa5);border:0.5px solid #6a7f9a"></div>
<div class="a" style="left:19.2px;top:85.3px;font-size:5px;color:#222;white-space:nowrap;color:#1e1e1e;letter-spacing:-0.12px">Pictures</div>
<div class="a" style="left:57px;top:86.0px;width:0.8px;height:4px;background:#777;transform:rotate(40deg)"></div>
<div class="a" style="left:11.5px;top:95.3px;width:4.5px;height:6px;background:#f5d66e;border:0.4px solid #dcbc53"></div>
<div class="a" style="left:19.2px;top:95.1px;font-size:5px;color:#222;white-space:nowrap;color:#1e1e1e;letter-spacing:-0.12px">SQL Updates</div>
<div class="a" style="left:11.5px;top:105.3px;width:4.5px;height:6px;background:#f5d66e;border:0.4px solid #dcbc53"></div>
<div class="a" style="left:19.2px;top:105.1px;font-size:5px;color:#222;white-space:nowrap;color:#1e1e1e;letter-spacing:-0.12px">System32</div>
<div class="a" style="left:7px;top:118px;width:6.5px;height:4.5px;background:#58b6e8;border:0.5px solid #2f7fb8"></div>
<div class="a" style="left:15.2px;top:117.8px;font-size:5px;color:#222;white-space:nowrap;color:#1e1e1e;letter-spacing:-0.12px">This PC</div>
<div class="a" style="left:7px;top:131.5px;width:6.5px;height:5px;background:#3a8fd8;border-radius:40% 60% 40% 40%"></div>
<div class="a" style="left:15.2px;top:130.8px;font-size:5px;color:#222;white-space:nowrap;color:#1e1e1e;letter-spacing:-0.12px">Network</div>
</div>

<!-- ===== RDP bar ===== -->
<div id="rdp" class="a" style="left:341px;top:-1px;width:264px;height:12.5px;background:#f3f3f3;border-radius:0 0 3px 3px;box-shadow:0 0.5px 2.5px rgba(0,0,0,.3);overflow:hidden">
  <div class="a" style="left:0;top:0;width:22px;height:12.5px;background:#ebebeb"></div>
  <svg class="a" style="left:8px;top:3.5px" width="8" height="8" viewBox="0 0 8 8"><g fill="none" stroke="#3a3a3a" stroke-width="0.8"><path d="M1 1 L7 7"/><path d="M4.2 0.8 L7.2 3.8 L5.8 4.3 L3.7 6.4 L3.8 7.2 L0.8 4.2 L1.6 4.3 L3.7 2.2 Z"/><path d="M2.2 5.8 L0.6 7.4"/></g></svg>
  <svg class="a" style="left:28.5px;top:3.3px" width="7" height="8" viewBox="0 0 7 8"><g fill="none" stroke="#3a3a3a" stroke-width="0.8"><rect x="0.8" y="3.4" width="5.4" height="4" rx="0.8"/><path d="M1.9 3.4 V2.2 A1.6 1.6 0 0 1 5.1 2.2 V3.4"/></g></svg>
  <div class="a" style="left:46.5px;top:8px;width:1.3px;height:2.3px;background:#2b2b2b"></div>
  <div class="a" style="left:49px;top:6.5px;width:1.3px;height:3.8px;background:#2b2b2b"></div>
  <div class="a" style="left:51.5px;top:5px;width:1.3px;height:5.3px;background:#2b2b2b"></div>
  <div class="a" style="left:54px;top:3.5px;width:1.3px;height:6.8px;background:#2b2b2b"></div>
  <div class="a" style="left:97.5px;top:4.6px;font-size:5.25px;color:#3a3a3a;white-space:nowrap">LAB - DC on DS-TESTBENCH</div>
  <div class="a" style="left:212px;top:6.8px;width:6px;height:0.7px;background:#222"></div>
  <div class="a" style="left:232px;top:4.6px;width:4.5px;height:4.5px;border:0.7px solid #222"></div>
  <div class="a" style="left:233.5px;top:3.2px;width:4.5px;height:4.5px;border-top:0.7px solid #222;border-right:0.7px solid #222"></div>
  <div class="a" style="left:250.8px;top:2px;font-size:7px;color:#222;line-height:10px">&#x2715;</div>
</div>

</div>
</body></html>
